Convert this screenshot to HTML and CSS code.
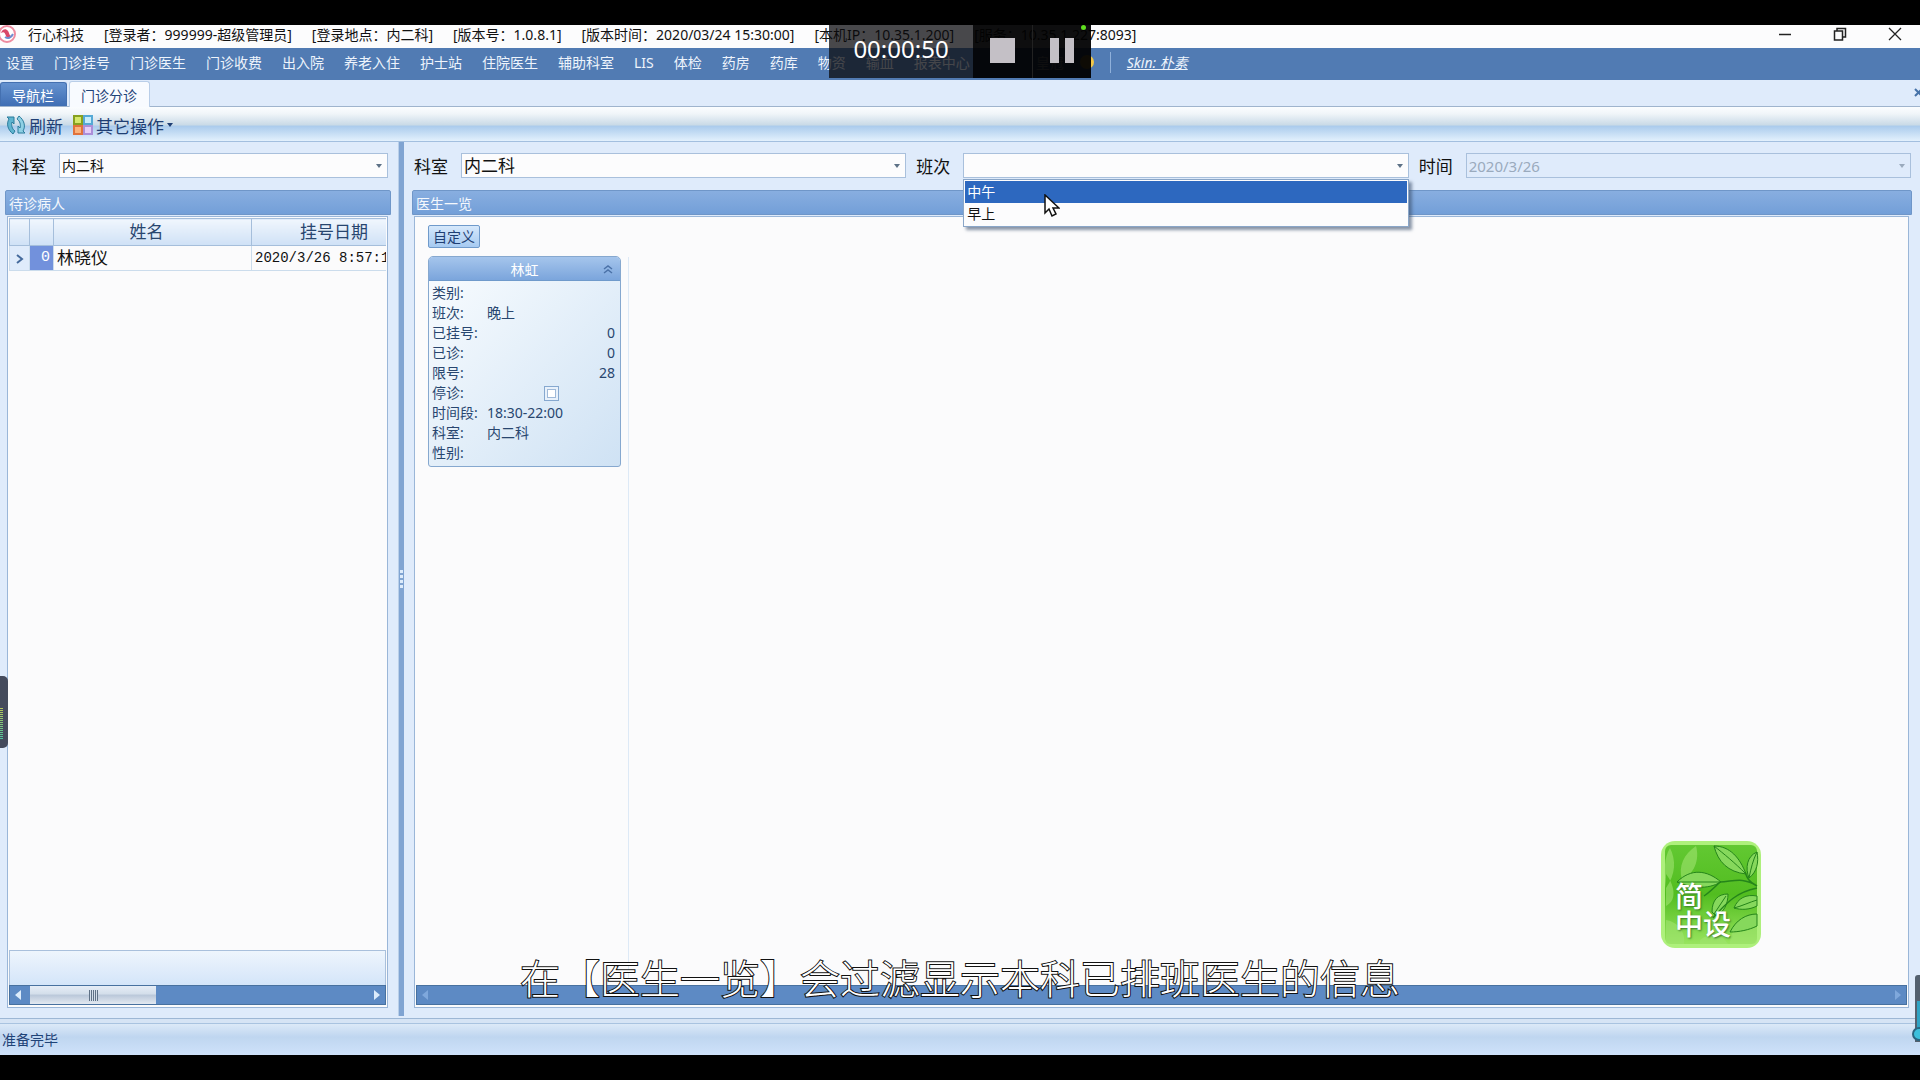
FILE: index.html
```html
<!DOCTYPE html>
<html lang="zh-CN">
<head>
    <meta charset="UTF-8">
    <meta name="viewport" content="width=device-width, initial-scale=1.0">
    <title>行心科技</title>
    <link rel="stylesheet" href="styles.css">
</head>
<body>
    <div class="window">
        <header class="title-bar">
            <svg class="app-logo" width="16" height="18" viewBox="0 0 16 18">
                <ellipse cx="7" cy="9" rx="8" ry="8" fill="#fff" stroke="#ee8ca0" stroke-width="2"/>
                <path d="M1 8c1-4 5-5 7-2s1 6 5 4c-2 4-6 4-7 1S4 6 1 8z" fill="#d9486a"/>
                <path d="M5 12c3 2 6 1 8-3" fill="none" stroke="#6f8fd0" stroke-width="2"/>
            </svg>
            <span>行心科技</span>
            <span>[登录者：999999-超级管理员]</span>
            <span>[登录地点：内二科]</span>
            <span>[版本号：1.0.8.1]</span>
            <span>[版本时间：2020/03/24 15:30:00]</span>
            <span>[本机IP：10.35.1.200]</span>
            <span>[服务：10.35.1.227:8093]</span>
            <div class="window-buttons">
                <button aria-label="最小化"><svg width="14" height="14" viewBox="0 0 14 14"><path d="M1 7.500h12" stroke="#222" stroke-width="1.500"/></svg></button>
                <button aria-label="还原"><svg width="14" height="14" viewBox="0 0 14 14"><path d="M1.500 4h8v9h-8zM4 4V1.500h8.500V10H10" fill="none" stroke="#222" stroke-width="1.500"/></svg></button>
                <button aria-label="关闭"><svg width="14" height="14" viewBox="0 0 14 14"><path d="M1 1l12 12M13 1L1 13" stroke="#222" stroke-width="1.300"/></svg></button>
            </div>
        </header>

        <nav class="menu-bar">
            <a href="#">设置</a>
            <a href="#">门诊挂号</a>
            <a href="#">门诊医生</a>
            <a href="#">门诊收费</a>
            <a href="#">出入院</a>
            <a href="#">养老入住</a>
            <a href="#">护士站</a>
            <a href="#">住院医生</a>
            <a href="#">辅助科室</a>
            <a href="#">LIS</a>
            <a href="#">体检</a>
            <a href="#">药房</a>
            <a href="#">药库</a>
            <a href="#">物资</a>
            <a href="#">输血</a>
            <a href="#">报表中心</a>
            <a href="#" class="menu-user">皇冠</a>
            <span class="menu-ball"></span>
            <span class="menu-separator"></span>
            <a href="#" class="skin-link">Skin: 朴素</a>
        </nav>

        <div class="tab-bar">
            <button class="tab">导航栏</button>
            <button class="tab active">门诊分诊</button>
            <button class="tab-close" aria-label="关闭标签"><svg width="9" height="9" viewBox="0 0 9 9"><path d="M1 1l7 7M8 1L1 8" stroke="#4672a8" stroke-width="2"/></svg></button>
        </div>

        <div class="toolbar">
            <button>
                <svg width="20" height="20" viewBox="0 0 20 20">
                    <path d="M1 2h7v7L6 7c-1 3 0 7 3 9l-2 3C2 15 0 9 3 4z" fill="#5fb4cf" stroke="#2b7c9c"/>
                    <path d="M19 18h-7v-7l2 2c1-3 0-7-3-9l2-3c5 4 7 10 4 15z" fill="#8fd0e4" stroke="#2b7c9c"/>
                </svg>
                刷新
            </button>
            <button>
                <svg width="20" height="20" viewBox="0 0 20 20">
                    <rect x="1" y="1" width="8" height="8" fill="#d4e86a" stroke="#86a020" stroke-width="2"/>
                    <rect x="11" y="1" width="8" height="8" fill="#c5ecfb" stroke="#55a9d6" stroke-width="2"/>
                    <rect x="1" y="11" width="8" height="8" fill="#fbb27a" stroke="#e0723c" stroke-width="2"/>
                    <rect x="11" y="11" width="8" height="8" fill="#e6cdf8" stroke="#ab8fd8" stroke-width="2"/>
                </svg>
                其它操作
                <i class="arrow-down"></i>
            </button>
        </div>

        <main class="workspace">
            <section class="panel panel-left">
                <div class="filters">
                    <div class="field">
                        <label for="left-dept">科室</label>
                        <div class="combo">
                            <select id="left-dept" class="small-text"><option>内二科</option></select>
                        </div>
                    </div>
                </div>
                <div class="group">
                    <h2>待诊病人</h2>
                    <div class="group-body">
                        <div class="grid-area">
                            <table class="patients">
                                <colgroup>
                                    <col class="col-mark">
                                    <col class="col-no">
                                    <col class="col-name">
                                    <col class="col-date">
                                </colgroup>
                                <thead>
                                    <tr><th></th><th></th><th class="name">姓名</th><th>挂号日期</th></tr>
                                </thead>
                                <tbody>
                                    <tr>
                                        <td class="mark"><svg width="8" height="10" viewBox="0 0 8 10"><path d="M1 1l5 4-5 4" fill="none" stroke="#456a9c" stroke-width="2"/></svg></td>
                                        <td class="no">0</td>
                                        <td>林晓仪</td>
                                        <td class="date">2020/3/26 8:57:1</td>
                                    </tr>
                                </tbody>
                            </table>
                        </div>
                        <div class="grid-footer"></div>
                        <div class="scrollbar">
                            <i class="arrow-left"></i>
                            <div class="thumb"><i></i></div>
                            <i class="arrow-right"></i>
                        </div>
                    </div>
                </div>
            </section>

            <div class="splitter"><i></i><i></i><i></i><i></i></div>

            <section class="panel panel-right">
                <div class="filters">
                    <div class="field">
                        <label for="dept">科室</label>
                        <div class="combo">
                            <select id="dept"><option>内二科</option></select>
                        </div>
                    </div>
                    <div class="field">
                        <label for="shift">班次</label>
                        <div class="combo">
                            <select id="shift"><option></option></select>
                            <ul class="dropdown" role="listbox" aria-label="班次">
                                <li class="selected" role="option" aria-selected="true">中午</li>
                                <li role="option" aria-selected="false">早上</li>
                            </ul>
                            <svg class="cursor" width="16" height="24" viewBox="0 0 16 24">
                                <path d="M1 1v18l4-4 3 7 4-2-3-6h6z" fill="#fff" stroke="#111" stroke-width="1.500"/>
                            </svg>
                        </div>
                    </div>
                    <div class="field">
                        <label for="date">时间</label>
                        <div class="combo disabled">
                            <select id="date" disabled><option>2020/3/26</option></select>
                        </div>
                    </div>
                </div>
                <div class="group">
                    <h2>医生一览</h2>
                    <div class="group-body">
                        <div class="doctors">
                            <div class="doctor-column">
                                <button class="customize">自定义</button>
                                <article class="card">
                                    <header>
                                        <h3>林虹</h3>
                                        <svg width="10" height="10" viewBox="0 0 10 10"><path d="M1 5l4-3 4 3M1 9l4-3 4 3" fill="none" stroke="#4b72a8" stroke-width="1.500"/></svg>
                                    </header>
                                    <dl>
                                        <dt>类别:</dt><dd></dd>
                                        <dt>班次:</dt><dd>晚上</dd>
                                        <dt>已挂号:</dt><dd class="number">0</dd>
                                        <dt>已诊:</dt><dd class="number">0</dd>
                                        <dt>限号:</dt><dd class="number">28</dd>
                                        <dt><label for="stopped">停诊:</label></dt><dd class="check"><input type="checkbox" id="stopped"></dd>
                                        <dt>时间段:</dt><dd>18:30-22:00</dd>
                                        <dt>科室:</dt><dd>内二科</dd>
                                        <dt>性别:</dt><dd></dd>
                                    </dl>
                                </article>
                            </div>
                        </div>
                        <div class="scrollbar idle">
                            <i class="arrow-left"></i>
                            <i class="arrow-right"></i>
                        </div>
                    </div>
                </div>
            </section>
        </main>

        <footer class="status-bar">准备完毕</footer>
    </div>

    <!-- floating widgets -->
    <div class="recorder">
        <span class="timer">00:00:50</span>
        <button class="stop" aria-label="停止"><i></i></button>
        <button class="pause" aria-label="暂停"><i></i><i></i></button>
        <span class="live-dot"></span>
    </div>

    <div class="side-meter"><i></i></div>

    <div class="ime">
        <svg width="102" height="109" viewBox="0 0 102 109">
            <defs>
                <linearGradient id="leaf-bg" x1="0" y1="0" x2="0" y2="1">
                    <stop offset="0" stop-color="#62c832"/>
                    <stop offset=".5" stop-color="#52bd20"/>
                    <stop offset="1" stop-color="#98e45e"/>
                </linearGradient>
            </defs>
            <rect x="1" y="1" width="100" height="107" rx="14" fill="#aef07c"/>
            <rect x="5" y="5" width="92" height="99" rx="6" fill="url(#leaf-bg)"/>
            <g fill="#a0e470" opacity=".6">
                <path d="M6 48C4 30 4 18 10 8c6 12 6 26-4 40zM22 40c-4-14 2-26 14-34 4 14-2 28-14 34zM6 66c12-6 8-22 0-32z"/>
                <path d="M70 104c0-16 12-24 27-22v18c0 3-2 4-5 4zM40 100c10-8 22-6 28 4H40zM6 80c12 2 20 12 18 24H10c-4 0-4-2-4-6z"/>
            </g>
            <g fill="#86d85c" stroke="#25851a">
                <path d="M54 6c16 0 26 12 32 28-18-2-28-12-32-28zM54 6c10 8 20 16 32 28"/>
                <path d="M97 12c-10 4-12 16-8 26 8-6 10-16 8-26zM97 12c-4 8-6 16-8 26"/>
                <path d="M17 42c14-14 30-12 44 0-14 8-30 6-44 0zM17 42h44"/>
                <path d="M74 68c4-10 12-14 23-12v10c-8 4-16 4-23 2zM74 68c8-2 16-6 23-8"/>
                <path d="M52 72c0-12 6-18 16-18 0 10-4 18-12 22zM54 74l12-18"/>
                <path d="M70 92c6-12 16-18 27-18v12c-8 4-18 6-27 6z"/>
            </g>
            <path d="M97 46C82 36 72 42 60 42M97 46c-8-4-10-8-12-14M60 42c-6 6-10 10-16 14M97 48c-20 4-30 14-44 30" fill="none" stroke="#25851a" stroke-width="1.500"/>
        </svg>
        <p>简<br>中设</p>
    </div>

    <svg class="thermometer" width="9" height="68" viewBox="0 0 9 68">
        <path d="M4 68V4c0-2 1-3 3-3h2v67z" fill="#54606e"/>
        <path d="M6 27h3v30H6z" fill="#2fa3c4"/>
        <circle cx="8" cy="60" r="6" fill="#3cc0dc" stroke="#2a6580" stroke-width="2"/>
    </svg>

    <p class="subtitle">在【医生一览】会过滤显示本科已排班医生的信息</p>
</body>
</html>
```
FILE: styles.css
```css
* {
    box-sizing: border-box;
}
body {
    display: flex;
    flex-direction: column;
    height: 100vh;
    margin: 0;
    padding: 25px 0;
    position: relative;
    overflow: hidden;
    background-color: #000;
    font-family: "Noto Sans", "Noto Sans CJK SC", sans-serif;
    font-size: 14px;
    color: #111;
}
button {
    padding: 0;
    border: none;
    background: none;
    font: inherit;
    color: inherit;
}
h2, h3, p, ul, dl, dd {
    margin: 0;
    padding: 0;
    font-weight: normal;
}
.window {
    display: flex;
    flex-direction: column;
    flex: 1;
    min-height: 0;
    background-color: #dfebfb;
}

/* title and menu */
.title-bar {
    display: flex;
    align-items: center;
    gap: 20px;
    height: 23px;
    padding-bottom: 6px;
    background-color: #fcfcfd;
    white-space: nowrap;
}
.app-logo {
    margin-right: -8px;
}
.window-buttons {
    display: flex;
    gap: 41px;
    margin-left: auto;
    padding-right: 18px;
}
.window-buttons svg, .tab-close svg {
    display: block;
}
.menu-bar {
    display: flex;
    align-items: center;
    gap: 20px;
    height: 32px;
    padding: 0 6px 4px;
    background-color: #517bb3;
    white-space: nowrap;
}
.menu-bar a {
    color: #eef4fc;
    text-decoration: none;
}
.menu-bar .menu-user {
    margin-left: 46px;
}
.menu-ball {
    width: 14px;
    height: 14px;
    margin-left: -4px;
    border-radius: 50%;
    background-color: #f3c94a;
}
.menu-separator {
    width: 1px;
    height: 21px;
    margin: 0 -4px;
    background-color: #8fb0da;
}
.menu-bar .skin-link {
    font-style: italic;
    text-decoration: underline;
}

/* tabs */
.tab-bar {
    display: flex;
    align-items: flex-end;
    gap: 2px;
    height: 27px;
    border-bottom: 1px solid #9fb4cd;
    background-color: #dfebfb;
}
.tab {
    height: 24px;
    padding: 0 12px 0 11px;
    border: 1px solid #4470b0;
    border-bottom: none;
    border-radius: 3px 3px 0 0;
    background: linear-gradient(#6592cf, #3f6eb4);
    color: #fff;
}
.tab.active {
    height: 26px;
    margin-bottom: -1px;
    border-color: #b9cee8;
    background: #f8fbff;
    color: #1f4377;
}
.tab-close {
    margin: 0 -3px 9px auto;
}

/* toolbar */
.toolbar {
    display: flex;
    align-items: center;
    gap: 10px;
    height: 35px;
    padding: 2px 0 0 6px;
    border-bottom: 1px solid #a3bfdf;
    background: linear-gradient(#fbfdff 0%, #f0f5f9 20%, #c8d9e6 54%, #a9caec 55%, #e3f1fd 100%);
}
.toolbar button {
    display: flex;
    align-items: center;
    gap: 3px;
    font-size: 17px;
    color: #1f3f74;
}
.arrow-down {
    border: 3px solid transparent;
    border-top: 4px solid #1f3f74;
    border-bottom: none;
}

/* panels */
.workspace {
    display: flex;
    flex: 1;
    min-height: 0;
    padding-bottom: 2px;
}
.panel {
    display: flex;
    flex-direction: column;
    padding-bottom: 8px;
    background-color: #dfebfb;
}
.panel-left {
    width: 399px;
    padding-left: 5px;
    padding-right: 7px;
    border-right: 1px solid #b9cfe9;
}
.panel-right {
    flex: 1;
    padding-left: 8px;
    padding-right: 8px;
}
.splitter {
    display: flex;
    flex-direction: column;
    justify-content: center;
    align-items: center;
    gap: 2px;
    width: 5px;
    background-color: #80a4d2;
}
.splitter i {
    width: 3px;
    height: 3px;
    background-color: #dcebfb;
}
.filters {
    display: flex;
    gap: 10px;
    padding: 11px 1px 12px 2px;
}
.panel-left .filters {
    padding-left: 7px;
    padding-right: 3px;
}
.field {
    display: flex;
    align-items: center;
    flex: 1;
    gap: 13px;
    font-size: 17px;
}
.field label {
    flex-shrink: 0;
    color: #111;
}
.combo {
    position: relative;
    flex: 1;
    height: 25px;
    border: 1px solid #a9c0dc;
    background-color: #fcfcfd;
}
.combo select {
    display: block;
    width: 100%;
    height: 23px;
    padding: 0 2px;
    border: none;
    appearance: none;
    background: none;
    font: inherit;
    font-size: 17px;
    color: #111;
}
.combo .small-text {
    font-size: 14px;
}
.combo::after {
    content: "";
    position: absolute;
    top: 10px;
    right: 5px;
    border: 3px solid transparent;
    border-top: 4px solid #5d7186;
    border-bottom: none;
}
.combo.disabled {
    background-color: #dfebfb;
}
.combo.disabled select {
    font-size: 15px;
    color: #9aaabd;
    opacity: 1;
}
.combo.disabled::after {
    border-top-color: #9aaabd;
}
.dropdown {
    position: absolute;
    top: 25px;
    left: -1px;
    right: -1px;
    z-index: 2;
    padding: 1px;
    border: 1px solid #8aa6c8;
    background-color: #fcfcfd;
    box-shadow: 3px 3px 3px rgba(60, 80, 110, 0.6);
    list-style: none;
}
.dropdown li {
    height: 22px;
    padding-left: 2px;
    font-size: 14px;
    line-height: 22px;
}
.dropdown .selected {
    background-color: #2d68bf;
    color: #fff;
}
.cursor {
    position: absolute;
    top: 40px;
    left: 80px;
    z-index: 3;
}

/* groups */
.group {
    display: flex;
    flex-direction: column;
    flex: 1;
    min-height: 0;
}
.group h2 {
    height: 25px;
    padding-left: 3px;
    border: 1px solid #6f96c8;
    border-radius: 2px 2px 0 0;
    background: linear-gradient(#88aee0, #739fd8);
    font-size: 14px;
    line-height: 25px;
    color: #f4f8fd;
}
.group-body {
    display: flex;
    flex-direction: column;
    flex: 1;
    min-height: 0;
    margin: 1px 3px 0 2px;
    padding: 1px 1px 2px;
    border: 1px solid #9ab6d8;
    background-color: #fbfbfc;
}
.grid-area {
    flex: 1;
    min-height: 0;
    overflow: hidden;
}
.patients {
    width: 408px;
    border-collapse: collapse;
    table-layout: fixed;
    font-size: 17px;
}
.col-mark {
    width: 20px;
}
.col-no {
    width: 24px;
}
.col-name {
    width: 198px;
}
.patients th {
    height: 27px;
    padding: 0;
    border: 1px solid #a5bedb;
    background: linear-gradient(#f0f6fd, #cfe1f6);
    font-weight: normal;
    line-height: 24px;
    color: #28466f;
}
.patients .name {
    padding-right: 12px;
}
.patients td {
    height: 25px;
    padding: 0 3px;
    border: 1px solid #cbdcec;
    line-height: 22px;
    white-space: nowrap;
}
.patients .mark {
    padding: 0;
    background-color: #dfebfb;
    text-align: center;
}
.patients .no {
    background-color: #7291dc;
    font-family: "Liberation Mono", monospace;
    font-size: 15px;
    text-align: right;
    color: #fff;
}
.patients .date {
    font-family: "Liberation Mono", monospace;
    font-size: 14px;
}
.grid-footer {
    height: 35px;
    border: 1px solid #a9c0dc;
    border-bottom: none;
    background: linear-gradient(#eef5fd, #d4e5f9);
}
.scrollbar {
    display: flex;
    align-items: center;
    height: 20px;
    padding: 0 5px;
    border: 1px solid #48719f;
    background-color: #5d8ac4;
}
.arrow-left, .arrow-right {
    border: 5px solid transparent;
}
.arrow-left {
    border-left: none;
    border-right: 6px solid #dcebfb;
}
.arrow-right {
    margin-left: auto;
    border-right: none;
    border-left: 6px solid #dcebfb;
}
.idle .arrow-left {
    border-right-color: #7fa8dc;
}
.idle .arrow-right {
    border-left-color: #7fa8dc;
}
.thumb {
    display: flex;
    align-items: center;
    justify-content: center;
    width: 126px;
    height: 18px;
    margin-left: 9px;
    background: linear-gradient(#e6edf6 0%, #d3deea 45%, #b9c7d9 50%, #e3e9f1 100%);
}
.thumb i {
    width: 9px;
    height: 11px;
    background: repeating-linear-gradient(90deg, #5f7186 0 1px, #d3deea 1px 2px);
}

/* doctor cards */
.doctors {
    flex: 1;
    min-height: 0;
    padding: 7px 12px 0;
}
.doctor-column {
    display: flex;
    flex-direction: column;
    align-items: flex-start;
    gap: 8px;
    width: 201px;
    height: 100%;
    background: linear-gradient(#dde9f6, #dde9f6) right 32px / 1px 100% no-repeat;
}
.customize {
    height: 23px;
    padding: 0 4px;
    border: 1px solid #6f9acb;
    border-radius: 2px;
    background: linear-gradient(#d6e8fb, #a6caf1);
    line-height: 21px;
    color: #1f3f74;
}
.card {
    width: 193px;
    border: 1px solid #86a8cf;
    border-radius: 5px 5px 3px 3px;
    background: linear-gradient(135deg, #fafdff, #cfe2f4);
    color: #28466f;
}
.card header {
    display: flex;
    align-items: center;
    height: 24px;
    padding-right: 7px;
    border-bottom: 1px solid #6f9acb;
    border-radius: 4px 4px 0 0;
    background: linear-gradient(#a5c5ec, #7ba5dc);
}
.card h3 {
    flex: 1;
    padding-left: 17px;
    font-size: 14px;
    text-align: center;
    color: #fff;
}
.card dl {
    display: grid;
    grid-template-columns: 55px 1fr;
    grid-auto-rows: 20px;
    padding: 2px 5px 3px 3px;
    line-height: 20px;
}
.card .number {
    text-align: right;
}
.card .check {
    display: flex;
    align-items: center;
    padding-left: 57px;
}
.card input {
    width: 15px;
    height: 15px;
    margin: 0;
    border: 1px solid #86a8cf;
    appearance: none;
    background-color: #fff;
    box-shadow: inset 0 0 0 2px #e8f1fb, inset 0 0 0 3px #9fb9d8;
}
.status-bar {
    height: 37px;
    padding-left: 2px;
    border-top: 1px solid #9db7d5;
    background: linear-gradient(#d6e4f5 0 4px, #a9c3e0 4px 5px, #dce9f8 5px, #bfd6f0 18px, #cfe2fa);
    line-height: 42px;
    color: #1f4377;
}

/* floating widgets */
.recorder {
    position: absolute;
    top: 25px;
    left: 829px;
    display: flex;
    width: 262px;
    height: 53px;
    background-color: rgba(10, 10, 12, 0.74);
}
.timer {
    width: 144px;
    font-size: 24px;
    line-height: 48px;
    text-align: center;
    color: #fff;
}
.recorder button {
    display: flex;
    align-items: center;
    justify-content: center;
    gap: 6px;
    flex: 1;
    background-color: rgba(0, 0, 0, 0.8);
}
.recorder .pause {
    border-left: 1px solid #222;
}
.stop i, .pause i {
    height: 25px;
    margin-bottom: 3px;
    background-color: #c4c0c6;
}
.stop i {
    width: 25px;
}
.pause i {
    width: 9px;
}
.live-dot {
    position: absolute;
    top: 0;
    right: 5px;
    width: 5px;
    height: 5px;
    border-radius: 50%;
    background-color: #5fe01e;
}
.side-meter {
    position: absolute;
    top: 676px;
    left: 0;
    width: 8px;
    height: 72px;
    padding-top: 32px;
    border-radius: 0 5px 5px 0;
    background-color: #454b5c;
}
.side-meter i {
    display: block;
    width: 3px;
    height: 31px;
    background: repeating-linear-gradient(transparent 0 1px, #454b5c 1px 2px), linear-gradient(#b8c85a, #4fc49c);
}
.ime {
    position: absolute;
    right: 158px;
    bottom: 131px;
    width: 102px;
    height: 109px;
}
.ime p {
    position: absolute;
    top: 42px;
    left: 15px;
    font-size: 28px;
    font-weight: 500;
    line-height: 28px;
    color: #fff;
    text-shadow: 1px 1px 2px #3c7a28;
}
.thermometer {
    position: absolute;
    right: 0;
    bottom: 38px;
}
.subtitle {
    position: absolute;
    bottom: 75px;
    left: 0;
    right: 0;
    font-family: "Noto Sans CJK SC", sans-serif;
    font-size: 40px;
    font-weight: 300;
    line-height: 56px;
    text-align: center;
    color: #fff;
    -webkit-text-stroke: 2px #111;
    paint-order: stroke fill;
}
```
